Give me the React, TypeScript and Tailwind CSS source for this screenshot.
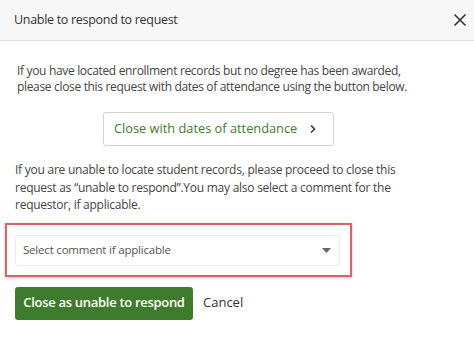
export default function App() {
  return (
    <div className="w-[474px] h-[363px] bg-white text-[#444] overflow-hidden" style={{ fontFamily: '"Open Sans", sans-serif' }}>
      <div className="h-[41px] bg-[#f7f7f7] border-b border-[#dedede] flex items-center justify-between pl-[14px] pr-[6px]">
        <h2 className="text-[12.5px] tracking-[-0.3px] text-[#333] font-medium">Unable to respond to request</h2>
        <svg width="14" height="14" viewBox="0 0 14 14" className="mr-[1px]">
          <path d="M1.5 1.5 L12.5 12.5 M12.5 1.5 L1.5 12.5" stroke="#333" strokeWidth="1.6" />
        </svg>
      </div>

      <div className="px-[17px] pt-[22px]">
        <p className="text-[12px] tracking-[-0.33px] leading-[16px] whitespace-nowrap">
          If you have located enrollment records but no degree has been awarded,
          <br />
          please close this request with dates of attendance using the button below.
        </p>

        <div className="mt-[17px] ml-[86px]">
          <button className="h-[34px] w-[231px] border border-[#cfd8cb] rounded-[3px] flex items-center pl-[10px] text-[12.8px] text-[#3f7a2e] font-medium">
            Close with dates of attendance
            <svg width="8" height="10" viewBox="0 0 8 10" className="ml-[12px]">
              <path d="M2 1.5 L5.5 5 L2 8.5" stroke="#333" strokeWidth="1.5" fill="none" />
            </svg>
          </button>
        </div>

        <p className="mt-[15px] -ml-[2px] text-[12px] tracking-[-0.25px] leading-[17.5px] whitespace-nowrap">
          If you are unable to locate student records, please proceed to close this
          <br />
          request as “unable to respond”.You may also select a comment for the
          <br />
          requestor, if applicable.
        </p>
      </div>

      <div className="ml-[5px] mt-[9px] w-[347px] h-[54px] border-2 border-[#d6646b] shadow-[0_1px_3px_rgba(0,0,0,0.25)] pl-[8px] pt-[10px]">
        <div className="w-[325px] h-[31px] border border-[#ececec] rounded-[3px] flex items-center justify-between pl-[7px] pr-[8px] text-[11.5px] tracking-[-0.2px] text-[#555]">
          Select comment if applicable
          <svg width="9" height="5" viewBox="0 0 9 5">
            <path d="M0 0 L9 0 L4.5 5 Z" fill="#666" />
          </svg>
        </div>
      </div>

      <div className="mt-[10px] ml-[15px] flex items-center gap-[10px]">
        <button className="h-[33px] w-[178px] rounded-[3px] bg-[#3e7b2c] text-white text-[13px] tracking-[-0.3px] font-semibold">
          Close as unable to respond
        </button>
        <button className="text-[13px] text-[#333]">Cancel</button>
      </div>
    </div>
  );
}
